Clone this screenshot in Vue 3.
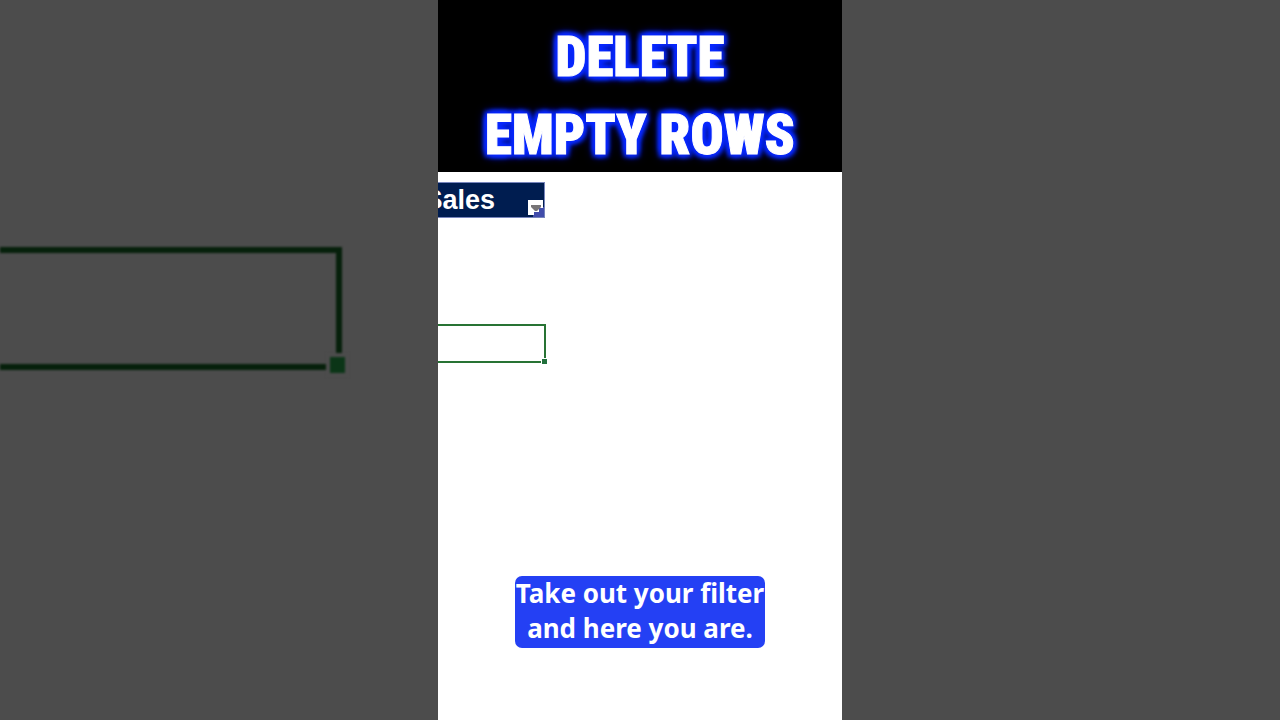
<script setup>
const titleLines = ['DELETE', 'EMPTY ROWS']
const captionLines = ['Take out your filter', 'and here you are.']
</script>

<template>
  <main class="stage">
    <div class="backdrop">
      <div class="range range-large"><span class="handle"></span></div>
    </div>

    <section class="video">
      <h1 class="title">
        <span v-for="line in titleLines" :key="line">{{ line }}</span>
      </h1>
      <div class="sheet">
        <div class="header-cell">
          <span class="label">Sales</span>
          <button class="filter" type="button" aria-label="Filter Sales">
            <svg width="16" height="18" viewBox="0 0 16 18">
              <path d="M5 18V12H10V8H16V18Z" fill="#414caa" />
              <path d="M0 1H15V9H11V13H6V16H0Z" fill="#fff" />
              <path d="M3 6H13V8L9 12H7L3 8Z" fill="#777476" />
            </svg>
          </button>
        </div>
        <div class="range range-small"><span class="handle"></span></div>
        <p class="caption">
          <span v-for="line in captionLines" :key="line">{{ line }}</span>
        </p>
      </div>
    </section>

    <div class="backdrop"></div>
  </main>
</template>

<style>
body {
  background: #4c4c4c;
}
</style>

<style scoped>
.stage {
  display: grid;
  grid-template-columns: 1fr minmax(0, 404px) 1fr;
  min-height: 100vh;
  overflow: hidden;
  background: #4c4c4c;
}

.backdrop {
  min-width: 0;
  padding-top: 247px;
}

.range {
  position: relative;
  box-sizing: border-box;
  border-style: solid;
  border-left: 0;
}

.range-large {
  width: 78%;
  height: 123px;
  border-width: 6px 6px 6px 0;
  border-color: #06200b;
  filter: blur(1px);
}

.handle {
  position: absolute;
}

.range-large .handle {
  right: -13px;
  bottom: -13px;
  width: 15px;
  height: 16px;
  border: 4px solid #4c4c4c;
  background: #0b3517;
}

.video {
  display: flex;
  flex-direction: column;
  min-width: 0;
  overflow: hidden;
  background: #fff;
}

.title {
  display: flex;
  flex-direction: column;
  box-sizing: border-box;
  height: 172px;
  margin: 0;
  padding-top: 18px;
  overflow: hidden;
  background: #000;
  color: #fff;
  font: 900 55px/78px "Roboto Condensed", "Liberation Sans Narrow", sans-serif;
  text-align: center;
  white-space: nowrap;
  -webkit-text-stroke: 1px #fff;
  text-shadow:
    3px 3px 4px #0828ff,
    -3px 3px 4px #0828ff,
    3px -3px 4px #0828ff,
    -3px -3px 4px #0828ff,
    0 0 8px #0828ff,
    0 0 12px #0828ff;
}

.sheet {
  display: flex;
  flex: 1;
  flex-direction: column;
  align-items: flex-start;
  padding: 10px 0 72px;
}

.header-cell {
  display: flex;
  align-items: flex-end;
  justify-content: flex-end;
  box-sizing: border-box;
  width: 107px;
  height: 36px;
  overflow: hidden;
  border: 1px solid #7785bc;
  border-left: 0;
  background: #001d50;
}

.label {
  margin-right: 33px;
  color: #fff;
  font: 700 27px/34px "Liberation Sans", Arial, sans-serif;
}

.filter {
  display: flex;
  flex: none;
  padding: 0;
  border: 0;
  background: none;
}

.range-small {
  width: 108px;
  height: 39px;
  margin-top: 106px;
  border-width: 2px 2px 2px 0;
  border-color: #287334;
}

.range-small .handle {
  right: -4px;
  bottom: -4px;
  width: 5px;
  height: 5px;
  border: 1px solid #fff;
  background: #21703c;
}

.caption {
  display: flex;
  flex-direction: column;
  align-self: center;
  box-sizing: border-box;
  width: 250px;
  height: 72px;
  margin: auto 0 0;
  border-radius: 7px;
  background: #2440f4;
  color: #fff;
  font: 700 26px/35px "Noto Sans", sans-serif;
  text-align: center;
  white-space: nowrap;
}
</style>
